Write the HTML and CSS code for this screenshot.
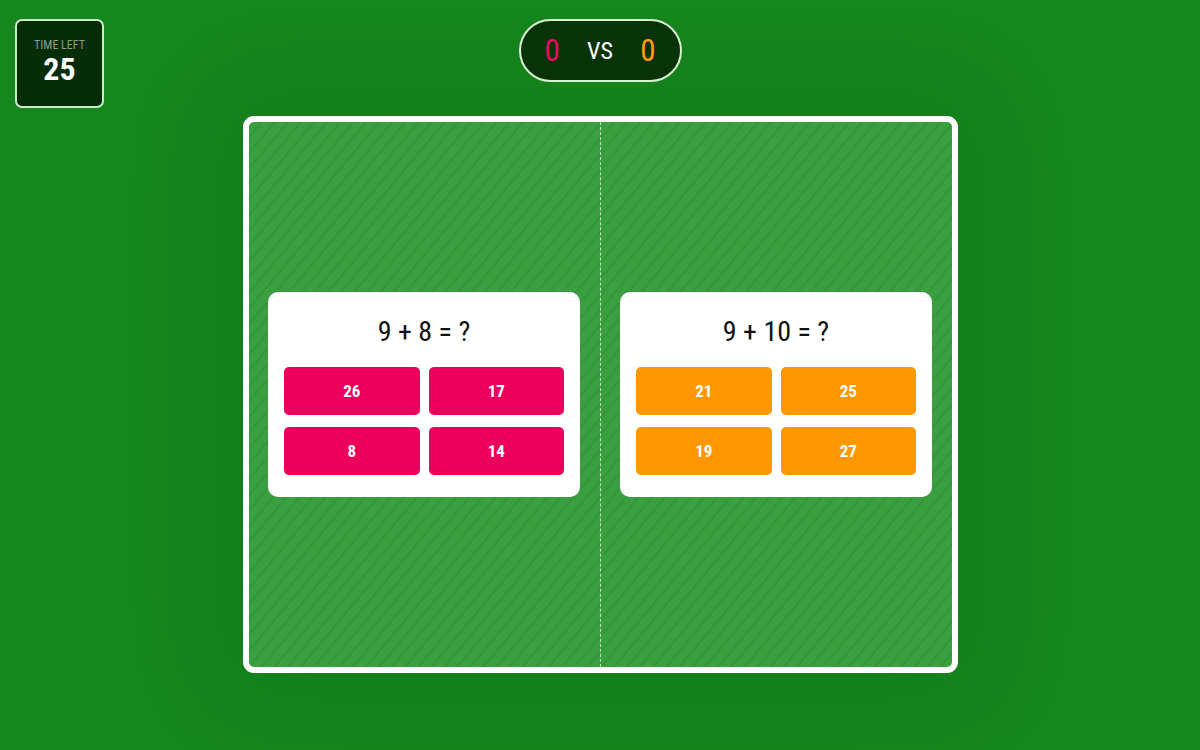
FILE: index.html
```html
<!DOCTYPE html>
<html>
<head>
<meta charset="utf-8">
<link rel="stylesheet" href="styles.css">
</head>
<body>
<div class="hud">
  <div class="timer">
    <div class="timer-label">TIME LEFT</div>
    <div class="timer-value">25</div>
  </div>
  <div class="score">
    <span class="score-p1">0</span>
    <span class="score-vs">VS</span>
    <span class="score-p2">0</span>
  </div>
  <div></div>
</div>
<div class="field">
  <div class="half">
    <div class="card">
      <div class="question">9 + 8 = ?</div>
      <div class="answers">
        <div class="btn pink">26</div>
        <div class="btn pink">17</div>
        <div class="btn pink">8</div>
        <div class="btn pink">14</div>
      </div>
    </div>
  </div>
  <div class="divider"></div>
  <div class="half">
    <div class="card">
      <div class="question">9 + 10 = ?</div>
      <div class="answers">
        <div class="btn orange">21</div>
        <div class="btn orange">25</div>
        <div class="btn orange">19</div>
        <div class="btn orange">27</div>
      </div>
    </div>
  </div>
</div>
</body>
</html>
```
FILE: styles.css
```css
html, body {
  margin: 0;
  padding: 0;
}
body {
  width: 1200px;
  height: 750px;
  overflow: hidden;
  background: #16861e;
  font-family: "Roboto Condensed", "Liberation Sans", Arial, sans-serif;
}
.hud {
  display: grid;
  grid-template-columns: 1fr auto 1fr;
  align-items: start;
  padding: 19px 15px 0;
  height: 63px;
}
.timer {
  width: 85px;
  height: 85px;
  box-sizing: content-box;
  border: 2px solid #c9ecc4;
  border-radius: 7px;
  background: #072d07;
  display: flex;
  flex-direction: column;
  align-items: center;
  justify-content: center;
}
.timer-label {
  color: #8e9e8c;
  font-size: 12px;
  margin-top: -3px;
}
.timer-value {
  color: #ffffff;
  font-weight: bold;
  font-size: 32px;
  line-height: 34px;
}
.score {
  border: 2px solid #d9f2d4;
  border-radius: 32px;
  background: #073307;
  display: flex;
  align-items: center;
  justify-content: space-between;
  padding: 0 24px 0 24px;
  box-sizing: border-box;
  width: 163px;
  height: 63px;
  font-size: 31px;
}
.score-p1 { color: #ea0b5e; }
.score-vs { color: #ffffff; font-size: 24px; }
.score-p2 { color: #ff9c06; }
.field {
  width: 703px;
  height: 545px;
  margin: 34px auto 0;
  border: 6px solid #ffffff;
  border-radius: 11px;
  background-color: #3aa03f;
  background-image: repeating-linear-gradient(-50deg, rgba(0,0,0,0) 0px, rgba(0,0,0,0) 8px, rgba(0,60,0,0.09) 8px, rgba(0,60,0,0.09) 10px);
  box-shadow: 0 0 100px 30px rgba(0,40,0,0.08);
  display: flex;
}
.half {
  flex: 1;
  display: flex;
  align-items: center;
  justify-content: center;
}
.divider {
  width: 0;
  border-left: 1px dashed rgba(255,255,255,0.7);
}
.card {
  width: 312px;
  height: 205px;
  box-sizing: border-box;
  background: #ffffff;
  border-radius: 10px;
  padding: 22px 16px 22px;
}
.question {
  text-align: center;
  font-size: 28px;
  color: #111111;
  line-height: 36px;
  height: 36px;
  margin-bottom: 17px;
}
.answers {
  display: grid;
  grid-template-columns: 1fr 1fr;
  column-gap: 9px;
  row-gap: 12px;
}
.btn {
  height: 48px;
  border-radius: 5px;
  display: flex;
  align-items: center;
  justify-content: center;
  color: #ffffff;
  font-weight: bold;
  font-size: 17px;
}
.pink { background: #eb005c; }
.orange { background: #ff9700; }
```
